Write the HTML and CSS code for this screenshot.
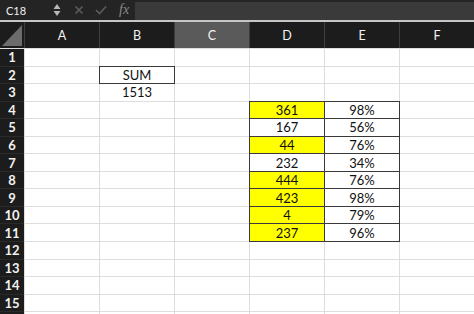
FILE: index.html
```html
<!DOCTYPE html>
<html lang="en">
<head>
  <meta charset="UTF-8" />
  <meta name="viewport" content="width=device-width, initial-scale=1.0" />
  <title>Sheet</title>
  <link rel="stylesheet" href="styles.css">
</head>
<body>
  <div class="formula-bar">
    <div class="name-box">C18</div>
    <svg class="stepper" width="8" height="14" viewBox="0 0 8 14">
      <path d="M4 1 L7.5 6 L0.5 6 Z M4 13 L7.5 8 L0.5 8 Z" fill="#b8b8b8" />
    </svg>
    <svg class="icon" width="10" height="10" viewBox="0 0 10 10">
      <path d="M1.5 1.5 L8.5 8.5 M8.5 1.5 L1.5 8.5" stroke="#5c5c5c" stroke-width="1.6" fill="none" />
    </svg>
    <svg class="icon" width="12" height="10" viewBox="0 0 12 10">
      <path d="M1 5 L4.5 8.5 L11 1.5" stroke="#5c5c5c" stroke-width="1.6" fill="none" />
    </svg>
    <span class="fx">fx</span>
    <div class="formula-input"></div>
  </div>

  <div class="sheet">
    <div class="corner"></div>
    <div class="col-head">A</div>
    <div class="col-head">B</div>
    <div class="col-head selected">C</div>
    <div class="col-head">D</div>
    <div class="col-head">E</div>
    <div class="col-head">F</div>

    <div class="row-head">1</div>
    <div class="cell"></div><div class="cell"></div><div class="cell"></div><div class="cell"></div><div class="cell"></div><div class="cell"></div>

    <div class="row-head">2</div>
    <div class="cell"></div><div class="cell boxed">SUM</div><div class="cell"></div><div class="cell"></div><div class="cell"></div><div class="cell"></div>

    <div class="row-head">3</div>
    <div class="cell"></div><div class="cell">1513</div><div class="cell"></div><div class="cell"></div><div class="cell"></div><div class="cell"></div>

    <div class="row-head">4</div>
    <div class="cell"></div><div class="cell"></div><div class="cell"></div><div class="cell boxed yellow">361</div><div class="cell boxed">98%</div><div class="cell"></div>

    <div class="row-head">5</div>
    <div class="cell"></div><div class="cell"></div><div class="cell"></div><div class="cell boxed">167</div><div class="cell boxed">56%</div><div class="cell"></div>

    <div class="row-head">6</div>
    <div class="cell"></div><div class="cell"></div><div class="cell"></div><div class="cell boxed yellow">44</div><div class="cell boxed">76%</div><div class="cell"></div>

    <div class="row-head">7</div>
    <div class="cell"></div><div class="cell"></div><div class="cell"></div><div class="cell boxed">232</div><div class="cell boxed">34%</div><div class="cell"></div>

    <div class="row-head">8</div>
    <div class="cell"></div><div class="cell"></div><div class="cell"></div><div class="cell boxed yellow">444</div><div class="cell boxed">76%</div><div class="cell"></div>

    <div class="row-head">9</div>
    <div class="cell"></div><div class="cell"></div><div class="cell"></div><div class="cell boxed yellow">423</div><div class="cell boxed">98%</div><div class="cell"></div>

    <div class="row-head">10</div>
    <div class="cell"></div><div class="cell"></div><div class="cell"></div><div class="cell boxed yellow">4</div><div class="cell boxed">79%</div><div class="cell"></div>

    <div class="row-head">11</div>
    <div class="cell"></div><div class="cell"></div><div class="cell"></div><div class="cell boxed yellow">237</div><div class="cell boxed">96%</div><div class="cell"></div>

    <div class="row-head">12</div>
    <div class="cell"></div><div class="cell"></div><div class="cell"></div><div class="cell"></div><div class="cell"></div><div class="cell"></div>

    <div class="row-head">13</div>
    <div class="cell"></div><div class="cell"></div><div class="cell"></div><div class="cell"></div><div class="cell"></div><div class="cell"></div>

    <div class="row-head">14</div>
    <div class="cell"></div><div class="cell"></div><div class="cell"></div><div class="cell"></div><div class="cell"></div><div class="cell"></div>

    <div class="row-head">15</div>
    <div class="cell"></div><div class="cell"></div><div class="cell"></div><div class="cell"></div><div class="cell"></div><div class="cell"></div>

    <div class="row-head"></div>
    <div class="cell"></div><div class="cell"></div><div class="cell"></div><div class="cell"></div><div class="cell"></div><div class="cell"></div>
  </div>
</body>
</html>
```

FILE: styles.css
```css
* {
  box-sizing: border-box;
}

html, body {
  margin: 0;
  height: 100%;
  overflow: hidden;
  background: #1c1c1c;
}

body {
  font-family: Lato, "Liberation Sans", sans-serif;
}

.formula-bar {
  display: flex;
  align-items: center;
  height: 22px;
  background: #242424;
  border-bottom: 2px solid #c6c6c6;
}

.name-box {
  width: 53px;
  padding-left: 6px;
  color: #f0f0f0;
  font-size: 11px;
}

.stepper {
  margin-right: 13px;
}

.icon {
  margin-right: 11px;
}

.fx {
  font-family: "Liberation Serif", serif;
  font-style: italic;
  font-size: 14px;
  color: #8a8a8a;
  margin-left: 1px;
  width: 16px;
}

.formula-input {
  flex: 1;
  align-self: stretch;
  margin-top: 2px;
  background: #3a3a3a;
}

.sheet {
  display: grid;
  grid-template-columns: 24px repeat(6, 74px);
  grid-template-rows: 26px repeat(16, 16.55px);
  gap: 1px;
  background: #dedede;
}

.corner {
  position: relative;
  background: #1c1c1c;
}

.corner::after {
  content: "";
  position: absolute;
  left: 2px;
  right: 2px;
  top: 3px;
  bottom: 2px;
  background: #6c6c6c;
  clip-path: polygon(0 100%, 100% 100%, 100% 0);
}

.col-head {
  display: flex;
  align-items: center;
  justify-content: center;
  background: #1c1c1c;
  color: #f2f2f2;
  font-size: 12.5px;
  box-shadow: -1px 0 0 #3e3e3e;
}

.col-head.selected {
  background: #5a5a5a;
}

.row-head {
  display: flex;
  align-items: center;
  justify-content: center;
  background: #1c1c1c;
  color: #f2f2f2;
  font-size: 13px;
  font-weight: bold;
  box-shadow: 0 1px 0 #2a2a2a;
}

.cell {
  display: flex;
  align-items: center;
  justify-content: center;
  background: #fff;
  color: #111;
  font-size: 13px;
}

.boxed {
  box-shadow: 0 0 0 1px #3a3a3a;
}

.yellow {
  background: #ffff00;
}
```
